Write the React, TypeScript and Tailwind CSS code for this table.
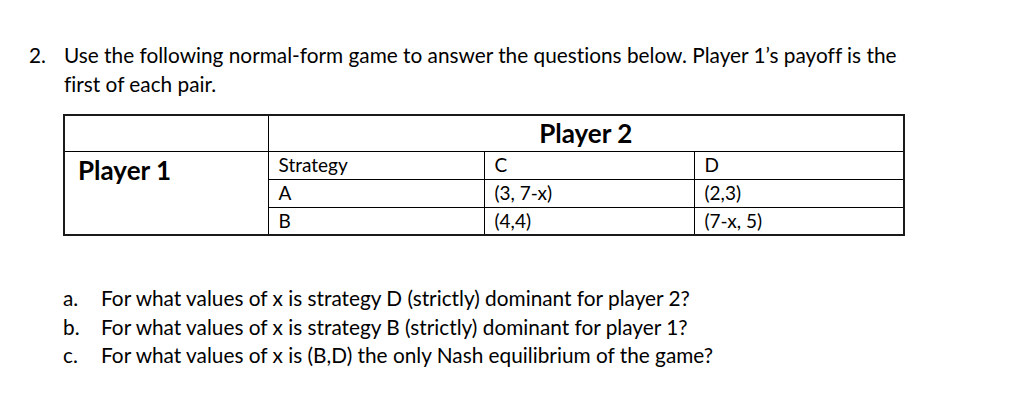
const ROWS = [
  { s: "Strategy", c: "C", d: "D" },
  { s: "A", c: "(3, 7-x)", d: "(2,3)" },
  { s: "B", c: "(4,4)", d: "(7-x, 5)" },
];

const QUESTIONS = [
  { k: "a.", t: "For what values of x is strategy D (strictly) dominant for player 2?" },
  { k: "b.", t: "For what values of x is strategy B (strictly) dominant for player 1?" },
  { k: "c.", t: "For what values of x is (B,D) the only Nash equilibrium of the game?" },
];

export default function App() {
  return (
    <div className="w-[1024px] h-[402px] bg-white text-black font-['Lato',sans-serif] [font-variant-ligatures:none] pt-[40px] overflow-hidden">
      <div className="flex pl-[29px] text-[20.8px] leading-[29px]">
        <span className="w-[35px] shrink-0">2.</span>
        <p className="w-[850px]">
          Use the following normal-form game to answer the questions below. Player 1’s payoff is the first of each pair.
        </p>
      </div>

      <table className="ml-[63px] mt-[16px] w-[840px] table-fixed border-collapse border-2 border-[#1a1a1a] text-[19px]">
        <colgroup>
          <col className="w-[204px]" />
          <col className="w-[216px]" />
          <col className="w-[210px]" />
          <col className="w-[210px]" />
        </colgroup>
        <tbody>
          <tr className="h-[36px]">
            <td className="border border-black" />
            <td colSpan={3} className="border border-black text-center font-bold text-[26px] leading-[34px]">
              Player 2
            </td>
          </tr>
          {ROWS.map((r, i) => (
            <tr key={r.s} className="h-[28px]">
              {i === 0 && (
                <td rowSpan={3} className="border border-black align-top pl-[13px] pt-[3px] font-bold text-[26px] leading-[30px]">
                  Player 1
                </td>
              )}
              <td className="border border-black pl-[10px] leading-[26px]">{r.s}</td>
              <td className="border border-black pl-[10px] leading-[26px]">{r.c}</td>
              <td className="border border-black pl-[10px] leading-[26px]">{r.d}</td>
            </tr>
          ))}
        </tbody>
      </table>

      <div className="mt-[48px] pl-[63px] text-[20.8px] leading-[28.5px]">
        {QUESTIONS.map((q) => (
          <div key={q.k} className="flex">
            <span className="w-[38px] shrink-0">{q.k}</span>
            <span>{q.t}</span>
          </div>
        ))}
      </div>
    </div>
  );
}
